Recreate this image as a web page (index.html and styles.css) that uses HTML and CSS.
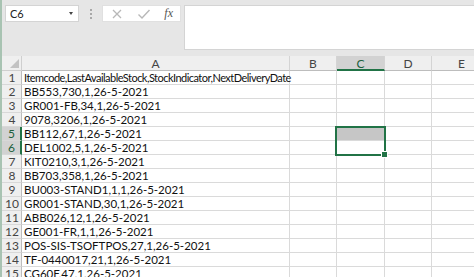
FILE: index.html
```html
<!DOCTYPE html>
<html>
<head>
<meta charset="utf-8">
<link rel="stylesheet" href="styles.css">
</head>
<body>
<div class="app">
  <div class="toolbar">
    <div class="namebox"><span class="ref">C6</span><span class="caret"></span></div>
    <div class="grip"><i></i><i></i><i></i></div>
    <div class="fbtns">
      <svg class="ico" width="12" height="12" viewBox="0 0 12 12"><path d="M2 2 L10 10 M10 2 L2 10" stroke="#b8b8b8" stroke-width="1.3" fill="none"/></svg>
      <svg class="ico" width="14" height="12" viewBox="0 0 14 12"><path d="M1.5 6.5 L5 10 L12.5 2" stroke="#b8b8b8" stroke-width="1.4" fill="none"/></svg>
      <span class="fx">fx</span>
    </div>
    <div class="finput"></div>
  </div>
  <div class="sheet">
    <div class="corner"><span class="tri"></span></div>
    <div class="ch">A</div>
    <div class="ch">B</div>
    <div class="ch sel">C</div>
    <div class="ch">D</div>
    <div class="ch">E</div>

    <div class="rh">1</div><div class="c tight">Itemcode,LastAvailableStock,StockIndicator,NextDeliveryDate</div><div class="c"></div><div class="c"></div><div class="c"></div><div class="c"></div>
    <div class="rh">2</div><div class="c">BB553,730,1,26-5-2021</div><div class="c"></div><div class="c"></div><div class="c"></div><div class="c"></div>
    <div class="rh">3</div><div class="c">GR001-FB,34,1,26-5-2021</div><div class="c"></div><div class="c"></div><div class="c"></div><div class="c"></div>
    <div class="rh">4</div><div class="c">9078,3206,1,26-5-2021</div><div class="c"></div><div class="c"></div><div class="c"></div><div class="c"></div>
    <div class="rh sel">5</div><div class="c">BB112,67,1,26-5-2021</div><div class="c"></div><div class="c fill"></div><div class="c"></div><div class="c"></div>
    <div class="rh sel">6</div><div class="c">DEL1002,5,1,26-5-2021</div><div class="c"></div><div class="c"></div><div class="c"></div><div class="c"></div>
    <div class="rh">7</div><div class="c">KIT0210,3,1,26-5-2021</div><div class="c"></div><div class="c"></div><div class="c"></div><div class="c"></div>
    <div class="rh">8</div><div class="c">BB703,358,1,26-5-2021</div><div class="c"></div><div class="c"></div><div class="c"></div><div class="c"></div>
    <div class="rh">9</div><div class="c">BU003-STAND1,1,1,26-5-2021</div><div class="c"></div><div class="c"></div><div class="c"></div><div class="c"></div>
    <div class="rh">10</div><div class="c">GR001-STAND,30,1,26-5-2021</div><div class="c"></div><div class="c"></div><div class="c"></div><div class="c"></div>
    <div class="rh">11</div><div class="c">ABB026,12,1,26-5-2021</div><div class="c"></div><div class="c"></div><div class="c"></div><div class="c"></div>
    <div class="rh">12</div><div class="c">GE001-FR,1,1,26-5-2021</div><div class="c"></div><div class="c"></div><div class="c"></div><div class="c"></div>
    <div class="rh">13</div><div class="c">POS-SIS-TSOFTPOS,27,1,26-5-2021</div><div class="c"></div><div class="c"></div><div class="c"></div><div class="c"></div>
    <div class="rh">14</div><div class="c">TF-0440017,21,1,26-5-2021</div><div class="c"></div><div class="c"></div><div class="c"></div><div class="c"></div>
    <div class="rh">15</div><div class="c">CG60F,47,1,26-5-2021</div><div class="c"></div><div class="c"></div><div class="c"></div><div class="c"></div>

    <div class="selbox"><span class="handle"></span></div>
  </div>
</div>
</body>
</html>
```

FILE: styles.css
```css
html, body {
  margin: 0;
  padding: 0;
}
body {
  width: 474px;
  height: 277px;
  overflow: hidden;
  background: #e6e6e6;
  font-family: "Lato", "Open Sans", sans-serif;
}
.app {
  border-left: 2px solid #a8c3b2;
  height: 277px;
  box-sizing: border-box;
  overflow: hidden;
}
.toolbar {
  height: 56px;
  box-sizing: border-box;
  padding: 5px 0 0 3px;
  display: flex;
  align-items: flex-start;
}
.namebox {
  width: 74px;
  height: 17px;
  box-sizing: border-box;
  background: #fff;
  border: 1px solid #d4d4d4;
  display: flex;
  align-items: center;
  justify-content: space-between;
  padding: 0 5px 0 4px;
  font-size: 11px;
  color: #222;
}
.caret {
  width: 0;
  height: 0;
  border-left: 2.5px solid transparent;
  border-right: 2.5px solid transparent;
  border-top: 3px solid #444;
}
.grip {
  width: 23px;
  height: 17px;
  display: flex;
  flex-direction: column;
  align-items: center;
  justify-content: center;
  gap: 2px;
}
.grip i {
  width: 2px;
  height: 2px;
  background: #a8a8a8;
  display: block;
}
.fbtns {
  width: 79px;
  height: 17px;
  box-sizing: border-box;
  background: #fff;
  border: 1px solid #e0e0e0;
  display: flex;
  align-items: center;
  padding: 0 7px 0 8px;
  justify-content: space-between;
}
.fx {
  font-family: "Liberation Serif", serif;
  font-style: italic;
  font-size: 12px;
  color: #555;
}
.finput {
  margin-left: 3px;
  flex: 1;
  height: 45px;
  background: #fff;
  border: 1px solid #d4d4d4;
  border-right: 0;
  box-sizing: border-box;
}
.sheet {
  position: relative;
  display: grid;
  grid-template-columns: 20px 268px 47px 48px 47px 60px;
  grid-template-rows: 15px repeat(15, 14px);
  background: #fff;
}
.corner, .ch, .rh {
  background: #efefef;
  box-sizing: border-box;
  color: #444;
}
.corner {
  border-right: 1px solid #cfcfcf;
  border-bottom: 1px solid #cfcfcf;
  position: relative;
}
.tri {
  position: absolute;
  right: 2px;
  bottom: 2px;
  width: 0;
  height: 0;
  border-left: 9px solid transparent;
  border-bottom: 9px solid #c2c2c2;
}
.ch {
  border-right: 1px solid #d4d4d4;
  border-bottom: 1px solid #bdbdbd;
  font-size: 12px;
  display: flex;
  align-items: center;
  justify-content: center;
  padding-top: 1px;
}
.ch.sel {
  background: #d2d2d2;
  border-bottom: 2px solid #217346;
  color: #215f3c;
}
.rh {
  border-right: 1px solid #bdbdbd;
  border-bottom: 1px solid #d8d8d8;
  font-size: 12px;
  display: flex;
  align-items: center;
  justify-content: center;
  padding-left: 1px;
}
.rh.sel {
  background: #d2d2d2;
  border-right: 2px solid #217346;
  color: #215f3c;
}
.c {
  box-sizing: border-box;
  border-right: 1px solid #dadada;
  border-bottom: 1px solid #dadada;
  font-size: 11.5px;
  line-height: 13px;
  padding-left: 2px;
  white-space: nowrap;
  color: #111;
  min-width: 0;
}
.c.tight {
  font-size: 11px;
  letter-spacing: -0.53px;
}
.c.fill {
  background: #c6c6c6;
}
.selbox {
  position: absolute;
  grid-row: 6 / 8;
  grid-column: 4 / 5;
  top: -1px;
  bottom: -1px;
  left: -2px;
  right: -1px;
  border: 2px solid #217346;
  pointer-events: none;
}
.handle {
  position: absolute;
  right: -4px;
  bottom: -4px;
  width: 5px;
  height: 5px;
  background: #217346;
  border: 1px solid #fff;
}
```
